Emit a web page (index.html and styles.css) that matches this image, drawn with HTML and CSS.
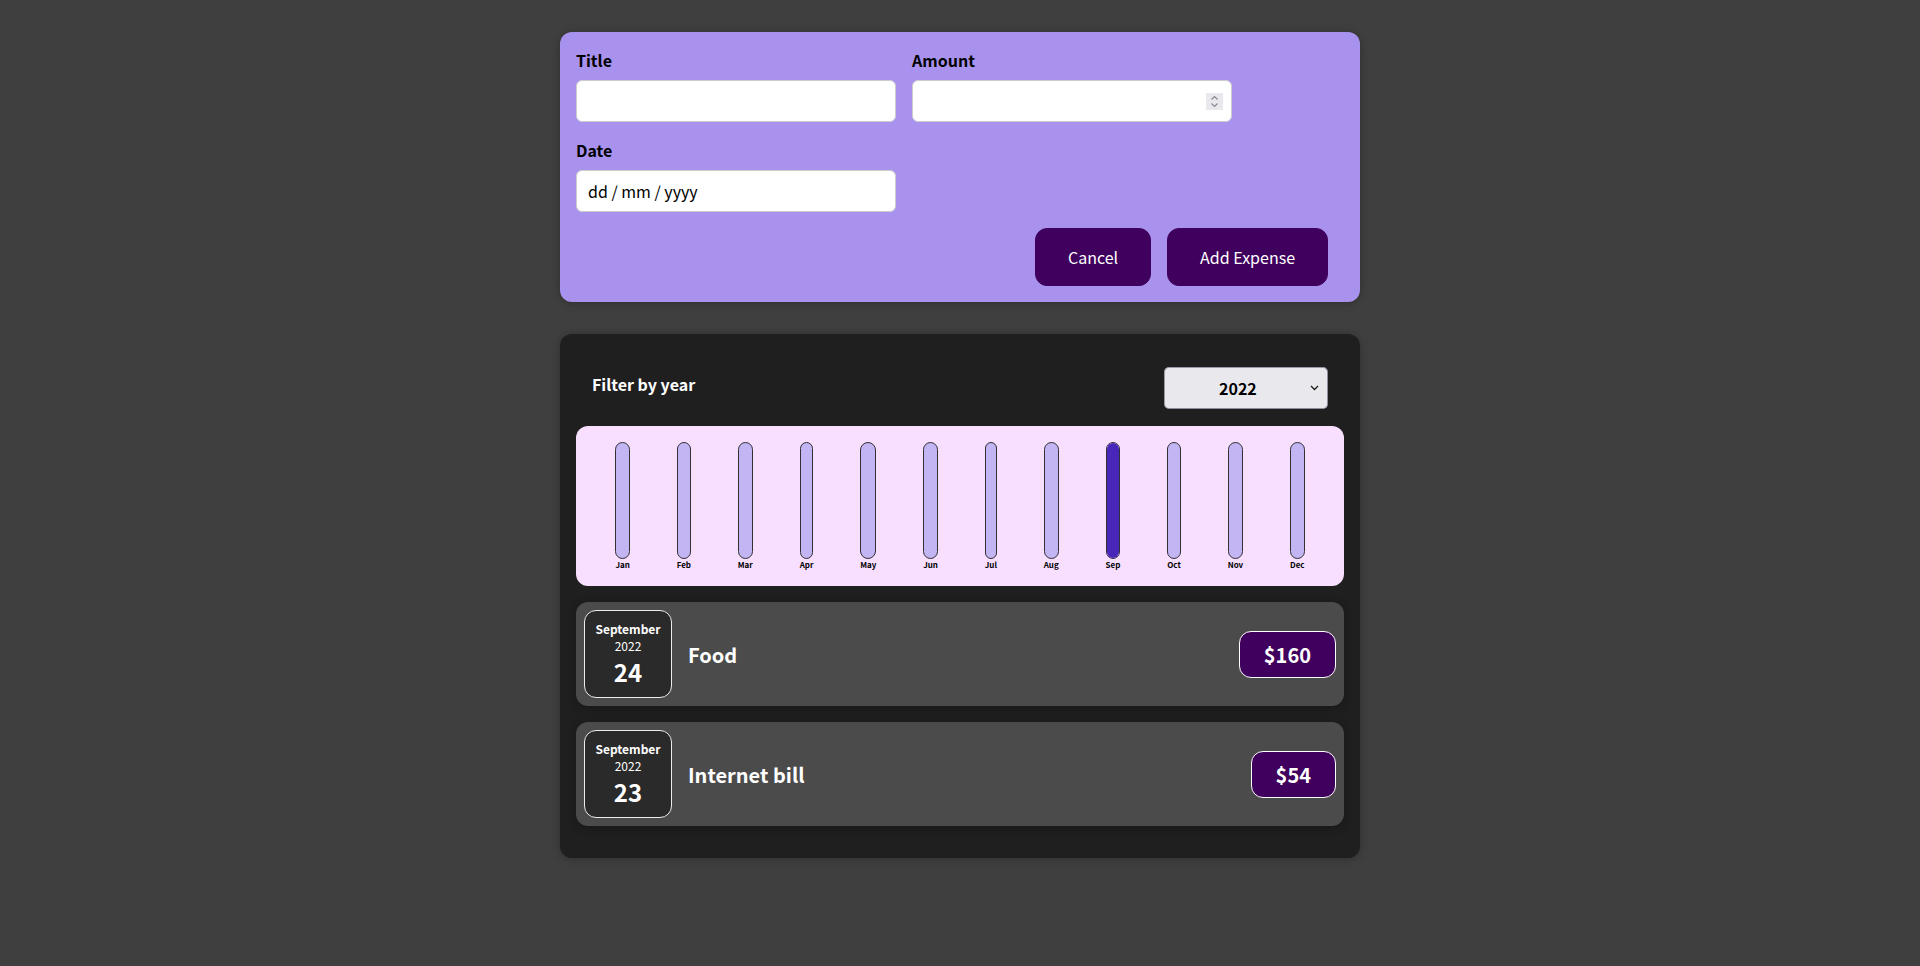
FILE: index.html
```html
<!DOCTYPE html>
<html lang="en">
<head>
<meta charset="utf-8">
<title>React App</title>
<link rel="stylesheet" href="styles.css">
</head>
<body>
<div class="app">
  <div class="new-expense">
    <form>
      <div class="new-expense__controls">
        <div class="new-expense__control">
          <label>Title</label>
          <input type="text">
        </div>
        <div class="new-expense__control">
          <label>Amount</label>
          <div class="number-field">
            <input type="text">
            <span class="spinner">
              <svg width="17" height="17" viewBox="0 0 17 17"><polyline points="5.5,6.5 8.5,3.5 11.5,6.5" fill="none" stroke="#84848e" stroke-width="1.1"/><polyline points="5.5,10.5 8.5,13.5 11.5,10.5" fill="none" stroke="#84848e" stroke-width="1.1"/></svg>
            </span>
          </div>
        </div>
        <div class="new-expense__control">
          <label>Date</label>
          <input type="text" class="date-input" placeholder="dd / mm / yyyy">
        </div>
      </div>
      <div class="new-expense__actions">
        <button type="button">Cancel</button><button type="button">Add Expense</button>
      </div>
    </form>
  </div>

  <div class="card expenses">
    <div class="expenses-filter">
      <div class="expenses-filter__control">
        <label>Filter by year</label>
        <div class="select-wrap">
          <select>
            <option>2022</option>
            <option>2021</option>
            <option>2020</option>
            <option>2019</option>
          </select>
          <svg class="select-chevron" width="9" height="6" viewBox="0 0 9 6"><polyline points="1,1 4.5,4.5 8,1" fill="none" stroke="#1a1a1a" stroke-width="1.3"/></svg>
        </div>
      </div>
    </div>

    <div class="chart">
      <div class="chart-bar"><div class="chart-bar__inner"><div class="chart-bar__fill" style="height:0%"></div></div><div class="chart-bar__label">Jan</div></div>
      <div class="chart-bar"><div class="chart-bar__inner"><div class="chart-bar__fill" style="height:0%"></div></div><div class="chart-bar__label">Feb</div></div>
      <div class="chart-bar"><div class="chart-bar__inner"><div class="chart-bar__fill" style="height:0%"></div></div><div class="chart-bar__label">Mar</div></div>
      <div class="chart-bar"><div class="chart-bar__inner"><div class="chart-bar__fill" style="height:0%"></div></div><div class="chart-bar__label">Apr</div></div>
      <div class="chart-bar"><div class="chart-bar__inner"><div class="chart-bar__fill" style="height:0%"></div></div><div class="chart-bar__label">May</div></div>
      <div class="chart-bar"><div class="chart-bar__inner"><div class="chart-bar__fill" style="height:0%"></div></div><div class="chart-bar__label">Jun</div></div>
      <div class="chart-bar"><div class="chart-bar__inner"><div class="chart-bar__fill" style="height:0%"></div></div><div class="chart-bar__label">Jul</div></div>
      <div class="chart-bar"><div class="chart-bar__inner"><div class="chart-bar__fill" style="height:0%"></div></div><div class="chart-bar__label">Aug</div></div>
      <div class="chart-bar"><div class="chart-bar__inner"><div class="chart-bar__fill" style="height:100%"></div></div><div class="chart-bar__label">Sep</div></div>
      <div class="chart-bar"><div class="chart-bar__inner"><div class="chart-bar__fill" style="height:0%"></div></div><div class="chart-bar__label">Oct</div></div>
      <div class="chart-bar"><div class="chart-bar__inner"><div class="chart-bar__fill" style="height:0%"></div></div><div class="chart-bar__label">Nov</div></div>
      <div class="chart-bar"><div class="chart-bar__inner"><div class="chart-bar__fill" style="height:0%"></div></div><div class="chart-bar__label">Dec</div></div>
    </div>

    <ul class="expenses-list">
      <li>
        <div class="card expense-item">
          <div class="expense-date">
            <div class="expense-date__month">September</div>
            <div class="expense-date__year">2022</div>
            <div class="expense-date__day">24</div>
          </div>
          <div class="expense-item__description">
            <h2>Food</h2>
            <div class="expense-item__price">$160</div>
          </div>
        </div>
      </li>
      <li>
        <div class="card expense-item">
          <div class="expense-date">
            <div class="expense-date__month">September</div>
            <div class="expense-date__year">2022</div>
            <div class="expense-date__day">23</div>
          </div>
          <div class="expense-item__description">
            <h2>Internet bill</h2>
            <div class="expense-item__price">$54</div>
          </div>
        </div>
      </li>
    </ul>
  </div>
</div>
</body>
</html>
```

FILE: styles.css
```css
* {
  box-sizing: border-box;
}

html {
  font-family: "Noto Sans CJK JP", "Noto Sans", sans-serif;
}

body {
  margin: 0;
  background-color: #3f3f3f;
}

/* New expense */
.new-expense {
  background-color: #a892ee;
  padding: 1rem;
  margin: 2rem auto;
  width: 50rem;
  max-width: 95%;
  border-radius: 12px;
  text-align: center;
  box-shadow: 0 1px 8px rgba(0, 0, 0, 0.25);
}

.new-expense form {
  margin: 0;
}

.new-expense button {
  font: inherit;
  cursor: pointer;
  padding: 1rem 2rem;
  border: 1px solid #40005d;
  background-color: #40005d;
  color: white;
  border-radius: 12px;
  margin-right: 1rem;
}

.new-expense__controls {
  display: flex;
  flex-wrap: wrap;
  gap: 1rem;
  margin-bottom: 1rem;
  text-align: left;
}

.new-expense__control label {
  font-weight: bold;
  margin-bottom: 0.5rem;
  display: block;
  color: #000;
}

.new-expense__control input {
  font: inherit;
  padding: 0.5rem;
  border-radius: 6px;
  border: 1px solid #ccc;
  width: 20rem;
  max-width: 100%;
  background: #fff;
  color: #000;
  outline: none;
}

.new-expense__control .date-input {
  padding-left: 11px;
}

.date-input::placeholder {
  color: #000;
  opacity: 1;
}

.number-field {
  position: relative;
  width: 20rem;
}

.number-field input {
  display: block;
}

.spinner {
  position: absolute;
  right: 9px;
  top: 13px;
  width: 17px;
  height: 17px;
  background: #e9e9ed;
  display: flex;
}

.new-expense__actions {
  text-align: right;
}

/* Card */
.card {
  border-radius: 12px;
  box-shadow: 0 1px 8px rgba(0, 0, 0, 0.25);
}

.expenses {
  padding: 1rem;
  background-color: rgb(31, 31, 31);
  margin: 2rem auto;
  width: 50rem;
  max-width: 95%;
}

/* Filter */
.expenses-filter {
  color: white;
  padding: 0 1rem;
}

.expenses-filter__control {
  display: flex;
  width: 100%;
  align-items: center;
  justify-content: space-between;
  margin: 1rem 0;
}

.expenses-filter label {
  font-weight: bold;
  margin-bottom: 0.5rem;
}

.select-wrap {
  position: relative;
  display: flex;
  padding: 1px 0;
}

.expenses-filter select {
  font: inherit;
  font-weight: bold;
  appearance: none;
  -webkit-appearance: none;
  width: 164px;
  height: 42px;
  padding: 0 3rem 0 calc(3rem + 6px);
  border-radius: 5px;
  border: 1px solid #8f8f9d;
  border-top-color: #9a9aa6;
  border-left-color: #9a9aa6;
  background-color: #e9e9ed;
  color: #000;
  outline: none;
}

.select-chevron {
  position: absolute;
  right: 9px;
  top: 19px;
  pointer-events: none;
}

/* Chart */
.chart {
  padding: 1rem;
  border-radius: 12px;
  background-color: #f8dfff;
  text-align: center;
  display: flex;
  justify-content: space-around;
  height: 10rem;
}

.chart-bar {
  height: 100%;
  display: flex;
  flex-direction: column;
  align-items: center;
}

.chart-bar__inner {
  height: 100%;
  width: 100%;
  border: 1px solid #313131;
  border-radius: 12px;
  background-color: #c3b4f3;
  overflow: hidden;
  display: flex;
  flex-direction: column;
  justify-content: flex-end;
}

.chart-bar__fill {
  background-color: #4826b9;
  width: 100%;
}

.chart-bar__label {
  font-weight: bold;
  font-size: 0.5rem;
  text-align: center;
  color: #000;
}

/* Expense list */
.expenses-list {
  list-style: none;
  padding: 0;
  margin: 0;
}

.expense-item {
  display: flex;
  justify-content: space-between;
  align-items: center;
  box-shadow: 0 2px 8px rgba(0, 0, 0, 0.25);
  padding: 0.5rem;
  margin: 1rem 0;
  border-radius: 12px;
  background-color: #4b4b4b;
}

.expense-item__description {
  display: flex;
  flex-direction: row;
  align-items: center;
  justify-content: flex-start;
  flex: 1;
}

.expense-item h2 {
  font-size: 1.25rem;
  flex: 1;
  margin: 0 1rem;
  color: white;
}

.expense-item__price {
  font-size: 1.25rem;
  font-weight: bold;
  color: white;
  background-color: #40005d;
  border: 1px solid white;
  padding: 0.5rem 1.5rem;
  border-radius: 12px;
}

.expense-date {
  display: flex;
  flex-direction: column;
  width: 5.5rem;
  height: 5.5rem;
  border: 1px solid #ececec;
  background-color: #2a2a2a;
  color: white;
  border-radius: 12px;
  align-items: center;
  justify-content: center;
}

.expense-date__month {
  font-size: 0.75rem;
  font-weight: bold;
}

.expense-date__year {
  font-size: 0.75rem;
}

.expense-date__day {
  font-size: 1.5rem;
  font-weight: bold;
}
```
